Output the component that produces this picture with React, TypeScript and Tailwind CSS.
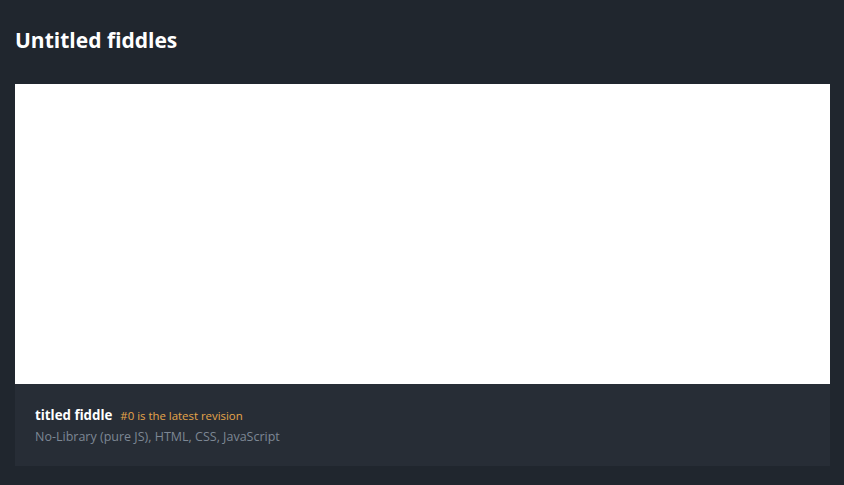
export default function App() {
  return (
    <div className="min-h-[485px] bg-[#20262e] pl-[15px] pr-[14px] pb-[20px] pt-[26px] font-['Open_Sans',sans-serif]">
      <h1 className="text-[21px] font-bold leading-[28px] text-white">Untitled fiddles</h1>
      <div className="mt-[30px]">
        <div className="h-[300px] bg-white" />
        <div className="bg-[#272d36] px-[20px] pb-[20px] pt-[22px]">
          <div className="flex items-baseline gap-[8px] leading-[18px]">
            <span className="text-[13.3px] font-bold text-white">titled fiddle</span>
            <span className="text-[11.4px] text-[#e6a54a]">#0 is the latest revision</span>
          </div>
          <div className="mt-[3px] text-[12.5px] leading-[18px] text-[#7d8794]">
            No-Library (pure JS), HTML, CSS, JavaScript
          </div>
        </div>
      </div>
    </div>
  );
}
